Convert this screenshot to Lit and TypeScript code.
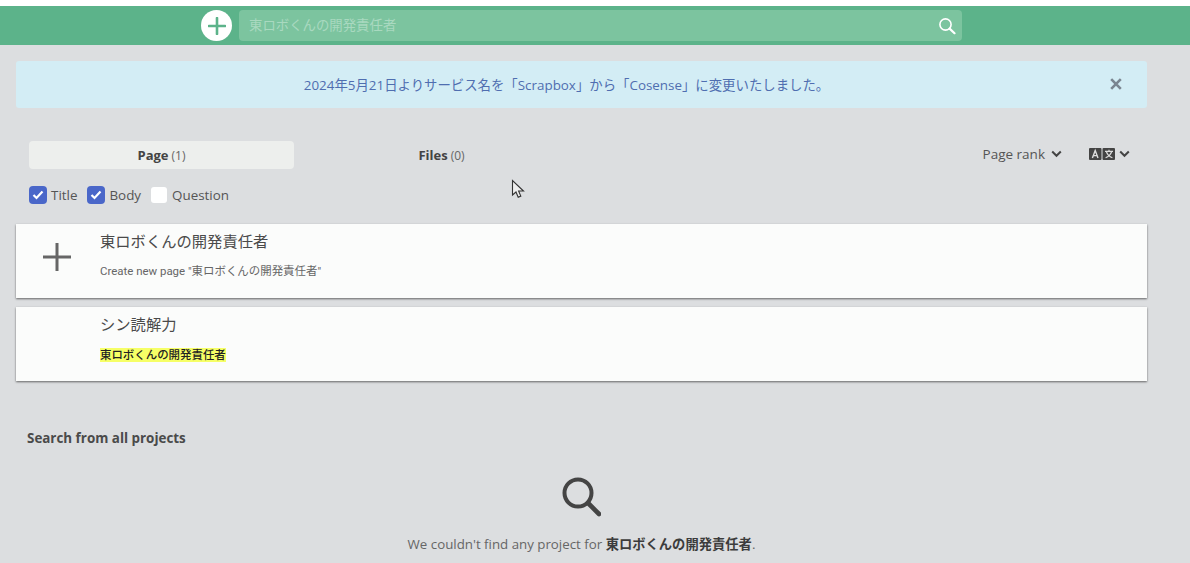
import { LitElement, html, css } from "lit";
import { customElement } from "lit/decorators.js";

const Q = "東ロボくんの開発責任者";
const chev = html`<svg class="chev" width="11" height="8" viewBox="0 0 11 8"><path d="M1.2 1.5 5.5 5.8 9.8 1.5" fill="none" stroke="#444" stroke-width="2"/></svg>`;
const check = html`<svg width="12" height="10" viewBox="0 0 12 10"><path d="M1.5 5 4.5 8 10.5 1.5" fill="none" stroke="#fff" stroke-width="2.2"/></svg>`;

@customElement("app-root")
export class AppRoot extends LitElement {
  static styles = css`
    :host {
      display: block;
      position: relative;
      width: 1190px;
      height: 563px;
      overflow: hidden;
      background: #dcdee0;
      color: #555;
      font-family: "Open Sans", "Noto Sans CJK JP", sans-serif;
      font-size: 13.4px;
    }
    .top { height: 6px; background: #fff; }
    .header {
      height: 39px;
      background: #5cb38a;
      display: flex;
      align-items: center;
      gap: 7px;
      padding-left: 201px;
    }
    .add {
      width: 31px; height: 31px; border-radius: 50%;
      background: #fff;
      display: flex; align-items: center; justify-content: center;
    }
    .search {
      width: 723px; height: 31px; border-radius: 4px;
      background: #7cc49f;
      display: flex; align-items: center; justify-content: space-between;
      padding: 0 6px 0 10px;
      box-sizing: border-box;
      color: #a9d9c0;
      font-size: 13.4px;
    }
    .search span { padding-bottom: 3px; }
    .main { padding: 16px 43px 0 16px; }
    .banner {
      height: 47px;
      background: #d3edf5;
      border-radius: 3px;
      display: flex; align-items: center; justify-content: center;
      position: relative;
      color: #4f6eb0;
      font-size: 13.4px;
      padding: 0 30px 2px 0;
      box-sizing: border-box;
    }
    .close { position: absolute; left: 1094px; top: 17px; display: flex; }
    .tabs {
      display: flex;
      align-items: center;
      margin: 33px 0 0 13px;
      height: 28px;
    }
    .tab {
      width: 265px; height: 28px; border-radius: 4px;
      display: flex; align-items: center; justify-content: center; gap: 3px;
      font-size: 12px;
      color: #666;
    }
    .tab b { font-size: 13px; color: #444; font-weight: 700; }
    .tab.on { background: #edefed; margin-right: 15px; }
    .sort {
      margin-left: auto;
      display: flex;
      align-items: center;
      color: #555;
      font-size: 13.5px;
      padding: 0 17px 2px 0;
    }
    .sort .chev { margin-left: 6px; }
    .lang { display: flex; margin: 0 4px 0 27px; }
    .lang + .chev { margin-left: 0; }
    .sort .lang + .chev { margin-left: 0; }
    .filters {
      display: flex; align-items: center;
      margin: 17px 0 0 13px;
      height: 18px;
    }
    .filter { display: flex; align-items: center; gap: 4px; margin-right: 10px; color: #555; }
    .filter span.t { padding-bottom: 1px; }
    .box {
      width: 18px; height: 18px; border-radius: 4px; box-sizing: border-box;
      background: #4a67c9;
      display: flex; align-items: center; justify-content: center;
    }
    .box.off { background: #fff; width: 16px; height: 16px; border-radius: 3px; }
    .filter.q { gap: 5px; }
    .card {
      height: 74px;
      background: #fbfcfb;
      box-shadow: 0 1px 2px rgba(0,0,0,.55);
      margin-bottom: 9px;
      position: relative;
      padding-left: 84px;
      box-sizing: border-box;
      font-family: Roboto, "Noto Sans CJK JP", sans-serif;
    }
    .cards { margin-top: 20px; }
    .plus { position: absolute; left: 26px; top: 18px; display: flex; }
    .title { font-size: 15.3px; color: #4a4a4a; padding-top: 6px; line-height: 24px; }
    .sub { font-size: 11.45px; color: #666; margin-top: 9px; line-height: 16px; }
    .sub.second { margin-top: 10px; }
    .hl { background: #f6ff66; color: #222; font-weight: 500; font-size: 11.45px; }
    .from { font-weight: 700; color: #4a4a4a; margin: 47px 0 0 11px; line-height: 20px; }
    .empty {
      display: flex; flex-direction: column; align-items: center;
      margin-top: 29px;
      width: 1131px;
      color: #666;
      font-size: 13.3px;
    }
    .empty svg { margin: 0 2px 17px 0; }
    .empty b { color: #3c3c3c; }
    .cursor { position: absolute; left: 511px; top: 179px; }
  `;

  render() {
    return html`
      <div class="top"></div>
      <div class="header">
        <div class="add">
          <svg width="18" height="18" viewBox="0 0 18 18"><path d="M9 1v16M1 9h16" stroke="#5cb38a" stroke-width="2.6" stroke-linecap="round"/></svg>
        </div>
        <div class="search">
          <span>${Q}</span>
          <svg width="18" height="18" viewBox="0 0 18 18"><circle cx="7.5" cy="7.5" r="5.6" fill="none" stroke="#fff" stroke-width="1.6"/><path d="M11.6 11.6 16.5 16.2" stroke="#fff" stroke-width="2.2" stroke-linecap="round"/></svg>
        </div>
      </div>
      <div class="main">
        <div class="banner">
          <span>2024年5月21日よりサービス名を「Scrapbox」から「Cosense」に変更いたしました。</span>
          <span class="close"><svg width="12" height="12" viewBox="0 0 12 12"><path d="M1.2 1.2 10.8 10.8M10.8 1.2 1.2 10.8" stroke="#7a8590" stroke-width="2.6"/></svg></span>
        </div>
        <div class="tabs">
          <div class="tab on"><b>Page</b> (1)</div>
          <div class="tab"><b>Files</b> (0)</div>
          <div class="sort">
            <span>Page rank</span>${chev}
            <span class="lang">
              <svg width="26" height="12" viewBox="0 0 26 12">
                <rect width="12.5" height="12" rx="1" fill="#444"/><rect x="13.5" width="12.5" height="12" rx="1" fill="#444"/>
                <path d="M3.4 10 6.2 2.4 9 10M4.5 7.6H8" fill="none" stroke="#ddd" stroke-width="1.4"/>
                <path d="M16 3.4h8M20 1.8v1.6M17.4 3.8c1 3 3.4 5 6 6M22.6 3.8c-1 3-3.4 5-6 6" fill="none" stroke="#ddd" stroke-width="1.2"/>
              </svg>
            </span>${chev}
          </div>
        </div>
        <div class="filters">
          <label class="filter"><span class="box">${check}</span><span class="t">Title</span></label>
          <label class="filter"><span class="box">${check}</span><span class="t">Body</span></label>
          <label class="filter q"><span class="box off"></span><span class="t">Question</span></label>
        </div>
        <div class="cards">
          <div class="card">
            <span class="plus"><svg width="30" height="30" viewBox="0 0 30 30"><path d="M15 1v28M1 15h28" stroke="#666" stroke-width="3"/></svg></span>
            <div class="title">${Q}</div>
            <div class="sub">Create new page "${Q}"</div>
          </div>
          <div class="card">
            <div class="title">シン読解力</div>
            <div class="sub second"><span class="hl">${Q}</span></div>
          </div>
        </div>
        <div class="from">Search from all projects</div>
        <div class="empty">
          <svg width="40" height="40" viewBox="0 0 40 40"><circle cx="17" cy="16" r="13.5" fill="none" stroke="#444" stroke-width="4"/><path d="M27 26 38 37" stroke="#444" stroke-width="4.6" stroke-linecap="round"/></svg>
          <div>We couldn't find any project for <b>${Q}</b>.</div>
        </div>
      </div>
      <svg class="cursor" width="14" height="21" viewBox="0 0 14 21"><path d="M1.5 1.5V16L5 13l2.2 5.2 2.6-1.1L7.6 12H12.5Z" fill="#eee" stroke="#333" stroke-width="1.1"/></svg>
    `;
  }
}
